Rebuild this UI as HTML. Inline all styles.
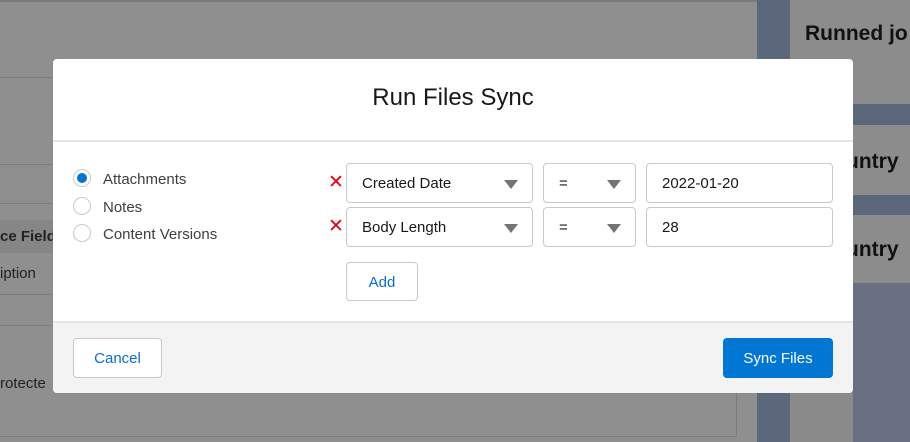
<!DOCTYPE html>
<html><head><style>
body{margin:0;width:910px;height:442px;overflow:hidden;position:relative;background:#8a8a8a;font-family:"Liberation Sans",sans-serif;color:#181818}
.a{position:absolute}
.box{position:absolute;background:#fff;border:1px solid #c9c9c9;border-radius:4px;box-sizing:border-box;font-size:15px;padding-left:15px;line-height:40px}
.tri{position:absolute;right:14px;top:16px;width:0;height:0;border-left:7px solid transparent;border-right:7px solid transparent;border-top:9px solid #747474}
.x{position:absolute;color:#e3001b;font-size:19px;left:328px}
.r{position:absolute;left:73px;width:18px;height:18px;border:1px solid #c9c9c9;border-radius:50%;box-sizing:border-box;background:#fff}
.lab{position:absolute;left:103px;font-size:15px;color:#3e3e3c}
</style></head><body>
<div class="a" style="left:0;top:0;width:757px;height:442px;background:#8f8f8f"></div>
<div class="a" style="left:0;top:0;width:757px;height:2px;background:#7a7a7a"></div>
<div class="a" style="left:757px;top:0;width:33px;height:442px;background:#5b677b"></div>
<div class="a" style="left:790px;top:0;width:120px;height:64px;background:#8c8c8c"></div>
<div class="a" style="left:790px;top:64px;width:120px;height:40px;background:#8c8c8c"></div>
<div class="a" style="left:853px;top:104px;width:57px;height:21px;background:#5b677b"></div>
<div class="a" style="left:853px;top:125px;width:57px;height:70px;background:#8c8c8c"></div>
<div class="a" style="left:853px;top:195px;width:57px;height:20px;background:#5b677b"></div>
<div class="a" style="left:853px;top:215px;width:57px;height:68px;background:#8c8c8c"></div>
<div class="a" style="left:853px;top:283px;width:57px;height:159px;background:#676f80"></div>
<div class="a" style="left:805px;top:22px;font-size:21px;font-weight:bold;color:#111">Runned jo</div>
<div class="a" style="left:846px;top:150px;font-size:21px;font-weight:bold;color:#111">untry</div>
<div class="a" style="left:846px;top:238px;font-size:21px;font-weight:bold;color:#111">untry</div>
<div class="a" style="left:0;top:77px;width:60px;height:1px;background:#7c7c7c"></div>
<div class="a" style="left:0;top:164px;width:60px;height:1px;background:#7c7c7c"></div>
<div class="a" style="left:0;top:203px;width:60px;height:1px;background:#7c7c7c"></div>
<div class="a" style="left:0;top:220px;width:60px;height:33px;background:#868686"></div>
<div class="a" style="left:0;top:228px;font-size:15px;font-weight:bold;color:#222">ce Field</div>
<div class="a" style="left:0;top:265px;font-size:15px;color:#222">iption</div>
<div class="a" style="left:0;top:294px;width:60px;height:1px;background:#7c7c7c"></div>
<div class="a" style="left:0;top:325px;width:60px;height:1px;background:#7c7c7c"></div>
<div class="a" style="left:0;top:375px;font-size:15px;color:#222">rotecte</div>
<div class="a" style="left:736px;top:390px;width:1px;height:46px;background:#7c7c7c"></div>
<div class="a" style="left:0;top:436px;width:737px;height:1px;background:#7c7c7c"></div>

<div class="a" style="left:53px;top:59px;width:800px;height:334px;background:#fff;border-radius:4px;overflow:hidden">
 <div class="a" style="left:0;top:0;width:800px;height:82px;text-align:center;line-height:78px;font-size:24px;color:#181818">Run Files Sync</div>
 <div class="a" style="left:0;top:81px;width:800px;height:2px;background:#e5e5e5"></div>
 <div class="a" style="left:0;top:262px;width:800px;height:72px;background:#f3f3f3;border-top:2px solid #e5e5e5"></div>
</div>
<div class="r" style="top:169px"><div class="a" style="left:3px;top:3px;width:10px;height:10px;border-radius:50%;background:#0176d3"></div></div>
<div class="r" style="top:197px"></div>
<div class="r" style="top:224px"></div>
<div class="lab" style="top:171px">Attachments</div>
<div class="lab" style="top:199px">Notes</div>
<div class="lab" style="top:226px">Content Versions</div>
<div class="x" style="top:171px">✕</div>
<div class="x" style="top:215px">✕</div>
<div class="box" style="left:346px;top:163px;width:187px;height:40px">Created Date<div class="tri"></div></div>
<div class="box" style="left:543px;top:163px;width:93px;height:40px">=<div class="tri"></div></div>
<div class="box" style="left:646px;top:163px;width:187px;height:40px">2022-01-20</div>
<div class="box" style="left:346px;top:207px;width:187px;height:40px">Body Length<div class="tri"></div></div>
<div class="box" style="left:543px;top:207px;width:93px;height:40px">=<div class="tri"></div></div>
<div class="box" style="left:646px;top:207px;width:187px;height:40px">28</div>
<div class="box" style="left:346px;top:262px;width:72px;height:39px;padding:0;text-align:center;color:#0b6ccf">Add</div>
<div class="box" style="left:73px;top:338px;width:89px;height:40px;padding:0;text-align:center;color:#0b6ccf">Cancel</div>
<div class="box" style="left:723px;top:338px;width:110px;height:40px;padding:0;text-align:center;color:#fff;background:#0176d3;border-color:#0176d3">Sync Files</div>
</body></html>
